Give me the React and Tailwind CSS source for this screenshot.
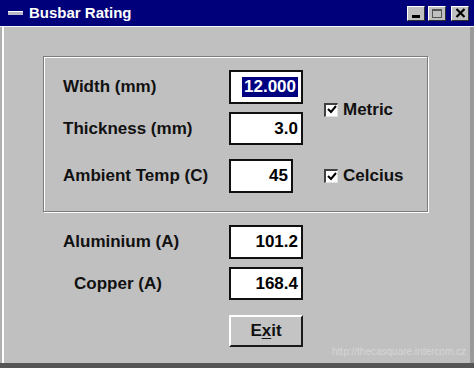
import React from 'react';

const font = { fontFamily: '"Liberation Sans", Arial, sans-serif' };

// sunken edit box
function Field({ value, selected, w = 'w-[74px]', h = 'h-[34px]' }) {
  return (
    <div className={`${w} ${h} bg-white border-2 border-[#101010] flex items-center justify-end pr-[3px]`}>
      {selected ? (
        <span className="bg-[#000080] text-white px-[2px] leading-[20px]">{value}</span>
      ) : (
        <span className="text-black leading-[20px]">{value}</span>
      )}
    </div>
  );
}

function Check({ label }) {
  return (
    <div className="flex items-center gap-[5px]">
      <div className="w-[14px] h-[14px] bg-white border-t-2 border-l-2 border-[#404040] border-r border-b border-r-[#e0e0e0] border-b-[#e0e0e0] flex items-center justify-center">
        <svg width="10" height="10" viewBox="0 0 10 10">
          <path d="M1 4 L4 7 L9 1" stroke="#000" strokeWidth="2" fill="none" />
        </svg>
      </div>
      <span>{label}</span>
    </div>
  );
}

function TitleButton({ children }) {
  return (
    <div className="w-[18px] h-[15px] bg-[#c0c0c0] border-t border-l border-white border-r border-b border-r-[#303030] border-b-[#303030] flex items-center justify-center">
      {children}
    </div>
  );
}

export default function App() {
  return (
    <div className="w-[474px] h-[368px] bg-[#c0c0c0] flex flex-col overflow-hidden font-bold text-[17px] text-[#111]" style={font}>
      {/* title bar */}
      <div className="h-[26px] bg-[#00007a] flex items-center pl-[8px] pr-[5px] shrink-0">
        <div className="w-[15px] h-[4px] bg-[#b8b8c8] border-t border-white mr-[6px]" />
        <span className="text-white text-[15px]">Busbar Rating</span>
        <div className="ml-auto flex items-center gap-[3px]">
          <TitleButton>
            <div className="w-[8px] h-[3px] bg-black mt-[7px]" />
          </TitleButton>
          <TitleButton>
            <div className="w-[10px] h-[9px] border border-[#555] border-t-2" />
          </TitleButton>
          <div className="ml-[2px]">
            <TitleButton>
              <svg width="11" height="10" viewBox="0 0 11 10">
                <path d="M1.5 1 L9.5 9 M9.5 1 L1.5 9" stroke="#000" strokeWidth="2.2" />
              </svg>
            </TitleButton>
          </div>
        </div>
      </div>

      {/* client area */}
      <div className="flex-1 flex border-t border-[#f4f4f4]">
        <div className="w-[2px] bg-[#b0b0b0]" />
        <div className="w-[2px] bg-white" />
        <div className="flex-1 flex flex-col pl-[39px] pt-[29px]">
          {/* group box */}
          <div className="w-[385px] h-[156px] border border-[#7c7c7c] shadow-[1px_1px_0_#ffffff,inset_1px_1px_0_#ffffff] pl-[19px] pt-[13px]">
            <div className="grid grid-cols-[166px_74px_1fr] grid-rows-[34px_33px_40px] gap-y-[8px]">
              <div className="flex items-center">Width (mm)</div>
              <Field value="12.000" selected />
              <div className="row-span-2 flex items-center pl-[21px] pt-[4px]">
                <Check label="Metric" />
              </div>
              <div className="flex items-center">Thickness (mm)</div>
              <Field value="3.0" h="h-[33px]" />
              <div className="flex items-center pt-[6px]">Ambient Temp (C)</div>
              <div className="pt-[6px]">
                <Field value="45" w="w-[64px]" />
              </div>
              <div className="flex items-center pl-[21px] pt-[6px]">
                <Check label="Celcius" />
              </div>
            </div>
          </div>

          {/* results */}
          <div className="flex flex-col gap-[8px] mt-[13px] pl-[20px]">
            <div className="flex items-center">
              <div className="w-[166px]">Aluminium (A)</div>
              <Field value="101.2" />
            </div>
            <div className="flex items-center">
              <div className="w-[166px] pl-[11px]">Copper (A)</div>
              <Field value="168.4" h="h-[33px]" />
            </div>
          </div>
          <div className="flex items-end mt-[15px] pl-[186px]">
            <div className="w-[74px] h-[32px] bg-[#c4c4c4] border-t-2 border-l-2 border-white border-r-2 border-b-2 border-r-[#1a1a1a] border-b-[#1a1a1a] flex items-center justify-center">
              <span>E<span className="underline underline-offset-2">x</span>it</span>
            </div>
            <div className="ml-auto mr-[4px] text-[10px] font-normal text-[#d6d6d6] mb-[-12px]">http://thecasquare.intercom.cz</div>
          </div>
        </div>
        <div className="w-[4px] bg-[#9a9a9a]" />
      </div>
      <div className="h-[5px] bg-[#555] shrink-0" />
    </div>
  );
}
